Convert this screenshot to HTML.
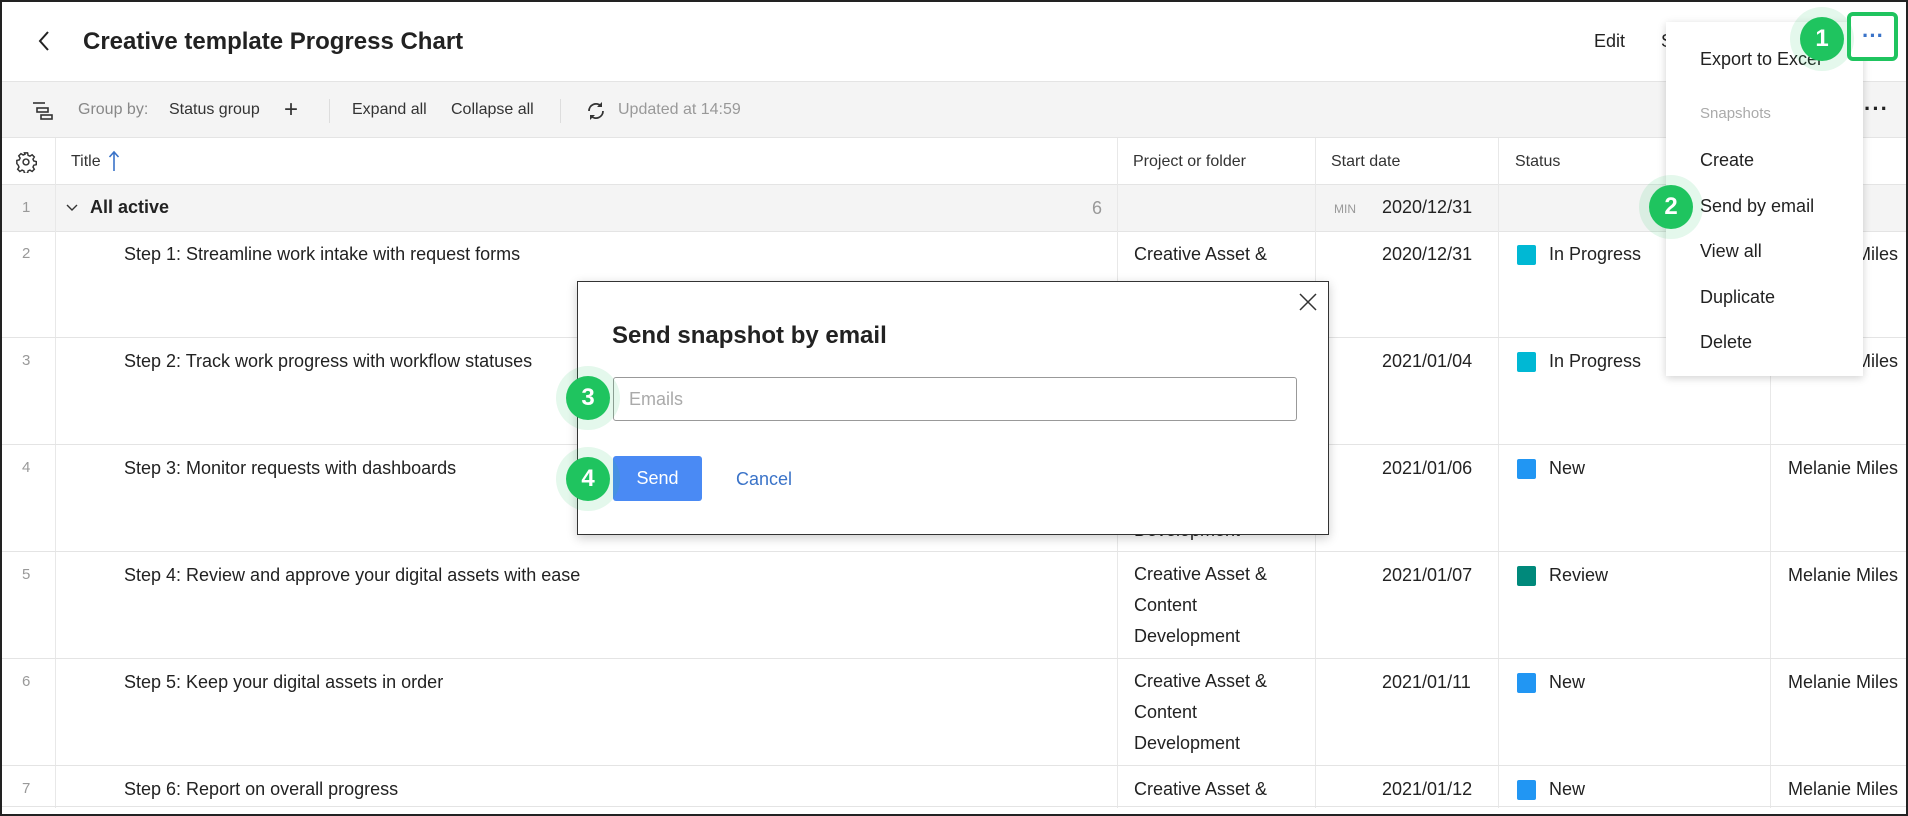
<!DOCTYPE html>
<html><head><meta charset="utf-8"><style>
*{box-sizing:border-box;margin:0;padding:0}
body{width:1908px;height:816px;overflow:hidden;background:#fff;font-family:"Liberation Sans",sans-serif;color:#222;position:relative;font-size:18px}
.a{position:absolute;white-space:nowrap}
.frame{position:absolute;left:0;top:0;width:1908px;height:816px;border:2px solid #222;pointer-events:none;z-index:50}
.hl{position:absolute;left:0;width:1908px;height:1px;background:#e4e4e4}
.vl{position:absolute;width:1px;background:#e8e8e8}
.num{color:#999;font-size:15px}
.sq{position:absolute;width:19px;height:20px;border-radius:2px}
.circ{position:absolute;width:44px;height:44px;border-radius:50%;background:#1fc45f;color:#fff;font-weight:bold;font-size:24px;text-align:center;line-height:44px;box-shadow:0 0 0 10px rgba(31,196,95,.12);z-index:40}
.mi{position:absolute;left:1700px;font-size:18px;color:#222;white-space:nowrap;z-index:21}
</style></head><body>
<!-- header -->
<svg class="a" style="left:36px;top:30px" width="16" height="22" viewBox="0 0 16 22"><path d="M12 2 L4 11 L12 20" fill="none" stroke="#222" stroke-width="2"/></svg>
<div class="a" style="left:83px;top:28px;font-size:24px;font-weight:bold;color:#222">Creative template Progress Chart</div>
<div class="a" style="left:1594px;top:31px;font-size:18px">Edit</div>
<div class="a" style="left:1661px;top:31px;font-size:18px">S</div>
<!-- toolbar -->
<div class="a" style="left:0;top:81px;width:1908px;height:57px;background:#f4f4f4;border-top:1px solid #e4e4e4;border-bottom:1px solid #e4e4e4"></div>
<svg class="a" style="left:32px;top:101px" width="22" height="20" viewBox="0 0 22 20"><g fill="none" stroke="#333" stroke-width="1.6"><path d="M1 2h12"/><rect x="5" y="7" width="11" height="4"/><rect x="9" y="14" width="11" height="4"/></g></svg>
<div class="a" style="left:78px;top:101px;font-size:16px;color:#888">Group by:</div>
<div class="a" style="left:169px;top:101px;font-size:16px;color:#333">Status group</div>
<div class="a" style="left:284px;top:96px;font-size:24px;color:#333;font-weight:300">+</div>
<div class="a" style="left:329px;top:99px;width:1px;height:24px;background:#ddd"></div>
<div class="a" style="left:352px;top:101px;font-size:16px;color:#333">Expand all</div>
<div class="a" style="left:451px;top:101px;font-size:16px;color:#333">Collapse all</div>
<div class="a" style="left:560px;top:99px;width:1px;height:24px;background:#ddd"></div>
<svg class="a" style="left:584px;top:99px" width="24" height="24" viewBox="0 0 24 24"><g fill="none" stroke="#333" stroke-width="1.8"><path d="M5 12a7 7 0 0 1 12-5"/><path d="M19 12a7 7 0 0 1-12 5"/></g><path d="M18 3v5h-5z" fill="#333"/><path d="M6 21v-5h5z" fill="#333"/></svg>
<div class="a" style="left:618px;top:101px;font-size:16px;color:#999">Updated at 14:59</div>
<div class="a" style="left:1864px;top:96px;font-size:22px;font-weight:bold;color:#222;letter-spacing:1px">···</div>
<!-- column header -->
<svg class="a" style="left:15px;top:151px" width="22" height="22" viewBox="0 0 24 24"><g fill="none" stroke="#333" stroke-width="1.6"><circle cx="12" cy="12" r="3.2"/><path d="M10.3 2h3.4l.6 2.7 2 .9 2.4-1.5 2.4 2.4-1.5 2.4.9 2 2.7.6v3.4l-2.7.6-.9 2 1.5 2.4-2.4 2.4-2.4-1.5-2 .9-.6 2.7h-3.4l-.6-2.7-2-.9-2.4 1.5-2.4-2.4 1.5-2.4-.9-2L2 13.7v-3.4l2.7-.6.9-2-1.5-2.4 2.4-2.4 2.4 1.5 2-.9z"/></g></svg>
<div class="a" style="left:71px;top:153px;font-size:16px;color:#333">Title</div>
<svg class="a" style="left:108px;top:150px" width="12" height="22" viewBox="0 0 12 22"><path d="M6 21V2M1.5 7 6 2l4.5 5" fill="none" stroke="#3a73c8" stroke-width="1.6"/></svg>
<div class="a" style="left:1133px;top:153px;font-size:16px;color:#333">Project or folder</div>
<div class="a" style="left:1331px;top:153px;font-size:16px;color:#333">Start date</div>
<div class="a" style="left:1515px;top:153px;font-size:16px;color:#333">Status</div>
<div class="hl" style="top:184px"></div>
<!-- group row -->
<div class="a" style="left:0;top:185px;width:1908px;height:46px;background:#f4f4f4"></div>
<div class="a num" style="left:22px;top:199px">1</div>
<svg class="a" style="left:66px;top:203px" width="12" height="10" viewBox="0 0 12 10"><path d="M1 2l5 5 5-5" fill="none" stroke="#333" stroke-width="1.4"/></svg>
<div class="a" style="left:90px;top:197px;font-size:18px;font-weight:bold">All active</div>
<div class="a" style="left:1092px;top:198px;font-size:18px;color:#999">6</div>
<div class="a" style="left:1334px;top:202px;font-size:12px;color:#999">MIN</div>
<div class="a" style="left:1382px;top:197px;font-size:18px">2020/12/31</div>
<div class="hl" style="top:231px"></div>
<!-- vertical lines -->
<div class="vl" style="left:55px;top:138px;height:670px"></div>
<div class="vl" style="left:1117px;top:138px;height:670px"></div>
<div class="vl" style="left:1315px;top:138px;height:670px"></div>
<div class="vl" style="left:1498px;top:138px;height:670px"></div>
<div class="vl" style="left:1770px;top:138px;height:670px"></div>
<!-- rows -->
<div class="hl" style="top:337px"></div><div class="hl" style="top:444px"></div><div class="hl" style="top:551px"></div><div class="hl" style="top:658px"></div><div class="hl" style="top:765px"></div>
<div class="a num" style="left:22px;top:245px">2</div>
<div class="a" style="left:124px;top:244px">Step 1: Streamline work intake with request forms</div>
<div class="a" style="left:1134px;top:244px">Creative Asset &amp;</div>
<div class="a" style="left:1382px;top:244px">2020/12/31</div>
<div class="sq" style="left:1517px;top:245px;background:#00b8d4"></div>
<div class="a" style="left:1549px;top:244px">In Progress</div>
<div class="a" style="left:1788px;top:244px">Melanie Miles</div>

<div class="a num" style="left:22px;top:352px">3</div>
<div class="a" style="left:124px;top:351px">Step 2: Track work progress with workflow statuses</div>
<div class="a" style="left:1382px;top:351px">2021/01/04</div>
<div class="sq" style="left:1517px;top:352px;background:#00b8d4"></div>
<div class="a" style="left:1549px;top:351px">In Progress</div>
<div class="a" style="left:1788px;top:351px">Melanie Miles</div>

<div class="a num" style="left:22px;top:459px">4</div>
<div class="a" style="left:124px;top:458px">Step 3: Monitor requests with dashboards</div>
<div class="a" style="left:1134px;top:520px">Development</div>
<div class="a" style="left:1382px;top:458px">2021/01/06</div>
<div class="sq" style="left:1517px;top:459px;background:#2196f3"></div>
<div class="a" style="left:1549px;top:458px">New</div>
<div class="a" style="left:1788px;top:458px">Melanie Miles</div>

<div class="a num" style="left:22px;top:566px">5</div>
<div class="a" style="left:124px;top:565px">Step 4: Review and approve your digital assets with ease</div>
<div class="a" style="left:1134px;top:559px;line-height:31px">Creative Asset &amp;<br>Content<br>Development</div>
<div class="a" style="left:1382px;top:565px">2021/01/07</div>
<div class="sq" style="left:1517px;top:566px;background:#00897b"></div>
<div class="a" style="left:1549px;top:565px">Review</div>
<div class="a" style="left:1788px;top:565px">Melanie Miles</div>

<div class="a num" style="left:22px;top:673px">6</div>
<div class="a" style="left:124px;top:672px">Step 5: Keep your digital assets in order</div>
<div class="a" style="left:1134px;top:666px;line-height:31px">Creative Asset &amp;<br>Content<br>Development</div>
<div class="a" style="left:1382px;top:672px">2021/01/11</div>
<div class="sq" style="left:1517px;top:673px;background:#2196f3"></div>
<div class="a" style="left:1549px;top:672px">New</div>
<div class="a" style="left:1788px;top:672px">Melanie Miles</div>

<div class="a num" style="left:22px;top:780px">7</div>
<div class="a" style="left:124px;top:779px">Step 6: Report on overall progress</div>
<div class="a" style="left:1134px;top:779px">Creative Asset &amp;</div>
<div class="a" style="left:1382px;top:779px">2021/01/12</div>
<div class="sq" style="left:1517px;top:780px;background:#2196f3"></div>
<div class="a" style="left:1549px;top:779px">New</div>
<div class="a" style="left:1788px;top:779px">Melanie Miles</div>
<div class="hl" style="top:806px"></div>

<!-- dropdown menu -->
<div class="a" style="left:1666px;top:22px;width:197px;height:354px;background:#fff;box-shadow:0 2px 8px rgba(0,0,0,.18);z-index:20"></div>
<div class="mi" style="top:49px">Export to Excel</div>
<div class="mi" style="top:105px;font-size:15px;color:#aaa">Snapshots</div>
<div class="mi" style="top:150px">Create</div>
<div class="mi" style="top:196px">Send by email</div>
<div class="mi" style="top:241px">View all</div>
<div class="mi" style="top:287px">Duplicate</div>
<div class="mi" style="top:332px">Delete</div>
<!-- highlighted dots button -->
<div class="a" style="left:1847px;top:12px;width:51px;height:49px;border:4px solid #1fc45f;border-radius:6px;background:#fff;z-index:30"></div>
<div class="a" style="left:1862px;top:23px;font-size:22px;font-weight:bold;color:#3a73c8;z-index:31">···</div>
<div class="circ" style="left:1800px;top:17px">1</div>
<div class="circ" style="left:1649px;top:185px">2</div>

<!-- modal -->
<div class="a" style="left:577px;top:281px;width:752px;height:254px;background:#fff;border:1.5px solid #333;box-shadow:0 3px 10px rgba(0,0,0,.2);z-index:25"></div>
<div style="position:absolute;left:0;top:0;z-index:26">
<svg class="a" style="left:1299px;top:293px" width="18" height="18" viewBox="0 0 18 18"><path d="M1 1l16 16M17 1L1 17" stroke="#333" stroke-width="1.5"/></svg>
<div class="a" style="left:612px;top:322px;font-size:24px;font-weight:bold;color:#222">Send snapshot by email</div>
<div class="a" style="left:613px;top:377px;width:684px;height:44px;border:1.5px solid #999;border-radius:3px"></div>
<div class="a" style="left:629px;top:389px;font-size:18px;color:#aaa">Emails</div>
<div class="a" style="left:613px;top:456px;width:89px;height:45px;background:#4a8af4;border-radius:3px;color:#fff;font-size:18px;text-align:center;line-height:45px">Send</div>
<div class="a" style="left:736px;top:469px;font-size:18px;color:#3a73c8">Cancel</div>
</div>
<div class="circ" style="left:566px;top:376px">3</div>
<div class="circ" style="left:566px;top:457px">4</div>
<div class="frame"></div>
</body></html>
